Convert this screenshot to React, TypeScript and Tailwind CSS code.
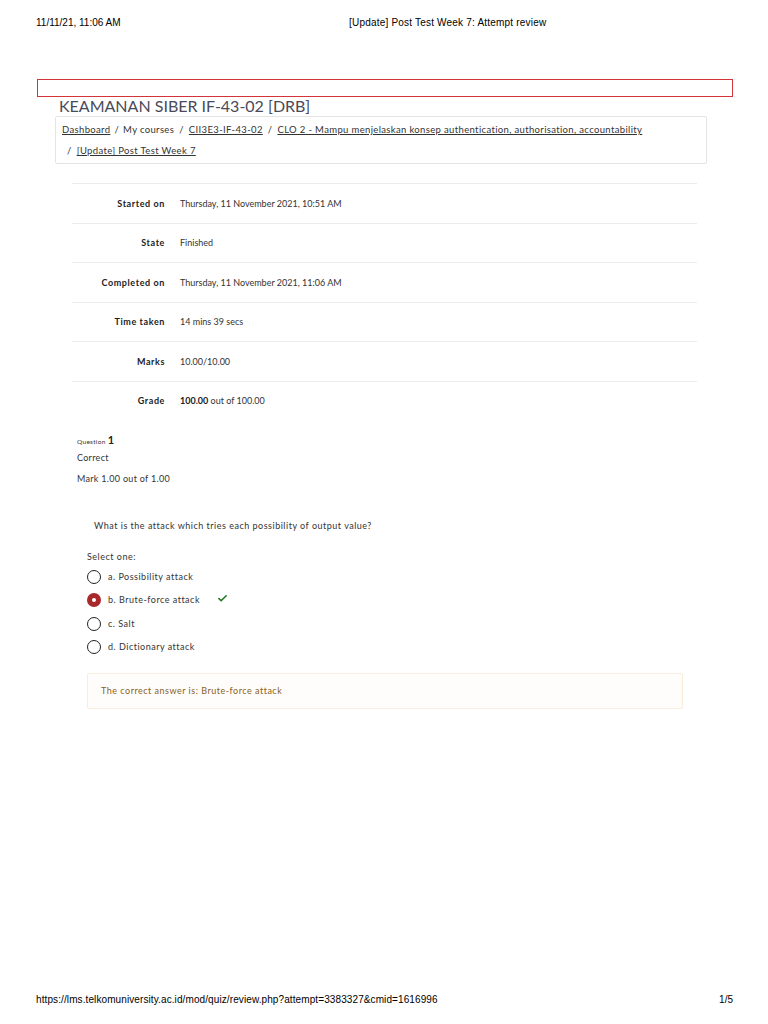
import { Check } from "lucide-react";

const rows = [
  { label: "Started on", value: "Thursday, 11 November 2021, 10:51 AM" },
  { label: "State", value: "Finished" },
  { label: "Completed on", value: "Thursday, 11 November 2021, 11:06 AM" },
  { label: "Time taken", value: "14 mins 39 secs" },
  { label: "Marks", value: "10.00/10.00" },
];

const options = [
  { text: "a. Possibility attack", checked: false },
  { text: "b. Brute-force attack", checked: true },
  { text: "c. Salt", checked: false },
  { text: "d. Dictionary attack", checked: false },
];

function Radio({ checked }: { checked: boolean }) {
  if (checked) {
    return (
      <span className="w-[14px] h-[14px] rounded-full bg-[#a8282b] flex items-center justify-center">
        <span className="w-[4px] h-[4px] rounded-full bg-white" />
      </span>
    );
  }
  return <span className="w-[14px] h-[14px] rounded-full border-[1.5px] border-[#222]" />;
}

export default function App() {
  return (
    <div className="w-[768px] h-[1024px] bg-white relative font-['Lato',sans-serif] text-[#333]">
      {/* print header */}
      <div className="flex pl-[36px] pt-[17px] text-[10px] leading-[12px] text-black font-['Liberation_Sans',sans-serif]">
        <span className="w-[313px]">11/11/21, 11:06 AM</span>
        <span className="tracking-[0.2px]">[Update] Post Test Week 7: Attempt review</span>
      </div>

      {/* red bar */}
      <div className="ml-[37px] mt-[50px] w-[696px] h-[18px] border border-[#d2343a]" />

      <div className="pl-[55px] w-[707px]">
        <h1 className="pl-[4px] text-[16px] leading-[18px] text-[#4a4a58]">
          KEAMANAN SIBER IF-43-02 [DRB]
        </h1>
        <div className="mt-[1px] border border-[#e4e4e4] rounded-[2px] px-[6px] pt-[2px] pb-[2px] text-[9.5px] tracking-[0.35px] leading-[21px]">
          <div>
            <span className="underline">Dashboard</span>
            <span className="px-[4px]">/</span>
            <span>My courses</span>
            <span className="px-[5px]">/</span>
            <span className="underline">CII3E3-IF-43-02</span>
            <span className="px-[5px]">/</span>
            <span className="underline">CLO 2 - Mampu menjelaskan konsep authentication, authorisation, accountability</span>
          </div>
          <div className="pl-[5px]">
            <span className="pr-[5px]">/</span>
            <span className="underline">[Update] Post Test Week 7</span>
          </div>
        </div>
      </div>

      {/* summary table */}
      <div className="ml-[72px] mt-[19px] w-[625px] text-[9px]">
        {rows.map((r) => (
          <div key={r.label} className="flex items-center h-[39.5px] border-t border-[#ececec]">
            <span className="w-[93px] text-right font-bold tracking-[0.6px] text-[#222]">{r.label}</span>
            <span className="pl-[15px]">{r.value}</span>
          </div>
        ))}
        <div className="flex items-center h-[39.5px] border-t border-[#ececec]">
          <span className="w-[93px] text-right font-bold tracking-[0.6px] text-[#222]">Grade</span>
          <span className="pl-[15px]">
            <b className="text-[#222]">100.00</b> out of 100.00
          </span>
        </div>
      </div>

      {/* question info */}
      <div className="ml-[77px] mt-[12px] text-[9px] tracking-[0.3px]">
        <div className="flex items-baseline gap-[2px]">
          <span className="text-[6.5px]">Question</span>
          <span className="text-[11px] font-bold text-[#222]">1</span>
        </div>
        <div className="mt-[2px]">Correct</div>
        <div className="mt-[8px]">Mark 1.00 out of 1.00</div>
      </div>

      {/* question body */}
      <div className="ml-[87px] mt-[33px] w-[596px] text-[9px] tracking-[0.5px]">
        <div className="pl-[7px]">What is the attack which tries each possibility of output value?</div>
        <div className="mt-[18px]">Select one:</div>
        <div className="mt-[6px] flex flex-col gap-[9.5px]">
          {options.map((o) => (
            <div key={o.text} className="flex items-center h-[14px]">
              <Radio checked={o.checked} />
              <span className="ml-[7px]">{o.text}</span>
              {o.checked && <Check className="ml-[17px] w-[11px] h-[11px] text-[#1f7a1f] -mt-[4px]" strokeWidth={3.5} />}
            </div>
          ))}
        </div>
        <div className="mt-[19px] h-[36px] border border-[#f8eddd] bg-[#fffdfb] rounded-[2px] flex items-center pl-[13px] text-[#8a6022]">
          The correct answer is: Brute-force attack
        </div>
      </div>

      {/* print footer */}
      <div className="absolute left-[36px] right-[35px] top-[994px] flex justify-between text-[10px] leading-[12px] text-black font-['Liberation_Sans',sans-serif]">
        <span className="tracking-[0.1px]">https://lms.telkomuniversity.ac.id/mod/quiz/review.php?attempt=3383327&amp;cmid=1616996</span>
        <span>1/5</span>
      </div>
    </div>
  );
}
